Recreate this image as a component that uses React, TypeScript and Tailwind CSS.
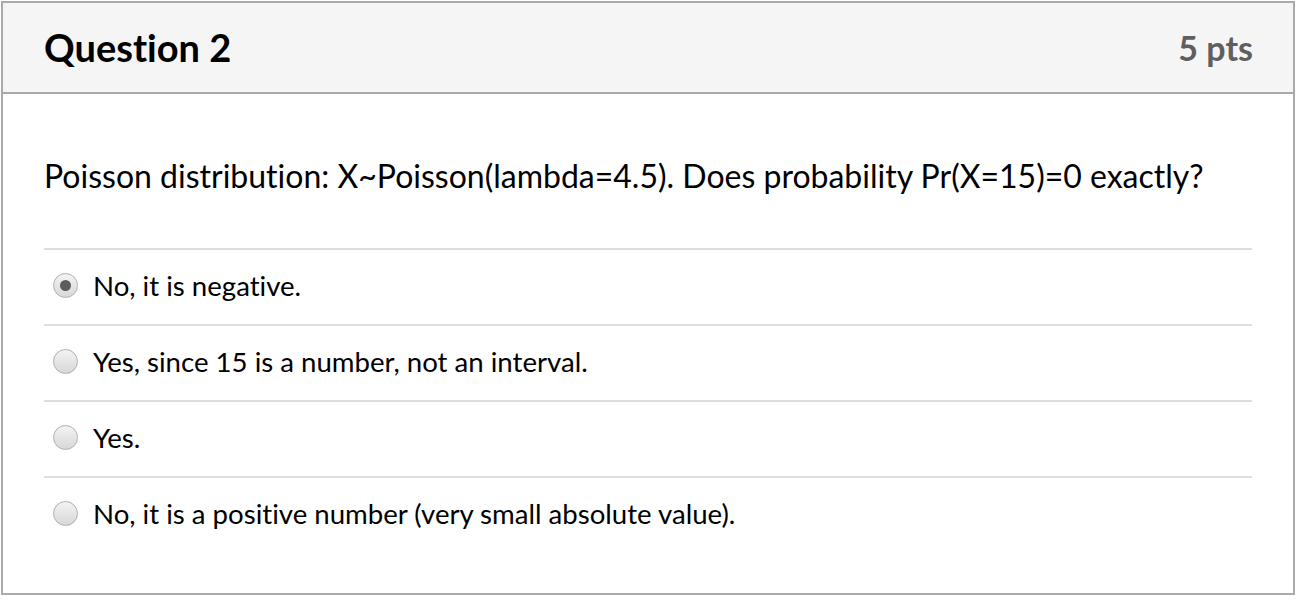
const options = [
  'No, it is negative.',
  'Yes, since 15 is a number, not an interval.',
  'Yes.',
  'No, it is a positive number (very small absolute value).',
];

function Radio({ checked }: { checked?: boolean }) {
  return (
    <span className="w-[25px] h-[25px] rounded-full border border-[#b0b0b0] bg-gradient-to-b from-[#f3f3f3] to-[#d8d8d8] flex items-center justify-center shrink-0">
      {checked && <span className="w-[11px] h-[11px] rounded-full bg-[#5c5c5c]" />}
    </span>
  );
}

export default function App() {
  return (
    <div className="w-[1300px] h-[602px] bg-white pt-[1px] pl-[1px] font-['Lato','Liberation_Sans',sans-serif] [font-variant-ligatures:none]">
      <div className="w-[1294px] h-[594px] border-2 border-[#aaaaaa]">
        {/* header */}
        <div className="h-[91px] bg-[#f5f5f5] border-b-2 border-[#aaaaaa] flex items-center justify-between pl-[41px] pr-[40px]">
          <h2 className="text-[38px] font-bold text-black">Question 2</h2>
          <span className="text-[34px] font-bold text-[#5f5f5f]">5 pts</span>
        </div>

        <div className="px-[41px] pt-[60px]">
          <p className="text-[32px] leading-[44px] text-black">
            Poisson distribution: X~Poisson(lambda=4.5). Does probability Pr(X=15)=0 exactly?
          </p>
          <div className="mt-[50px]">
            {options.map((o, i) => (
              <div key={i} className="h-[76px] border-t-2 border-[#dddddd] flex items-center gap-[15px] pl-[9px] pb-[3px]">
                <Radio checked={i === 0} />
                <span className="text-[27.6px] text-black">{o}</span>
              </div>
            ))}
          </div>
        </div>
      </div>
    </div>
  );
}
